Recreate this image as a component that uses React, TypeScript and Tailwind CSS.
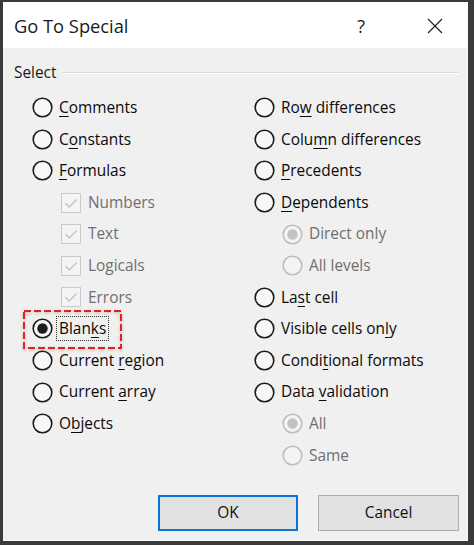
import React from "react";

const FONT = { fontFamily: '"Open Sans", "Noto Sans", sans-serif' };

function Radio({ checked = false, disabled = false }: { checked?: boolean; disabled?: boolean }) {
  const stroke = disabled ? "#bdbdbd" : "#1c1c1c";
  const dot = disabled ? "#c2c2c2" : "#1c1c1c";
  return (
    <svg width="21" height="21" viewBox="0 0 21 21" className="shrink-0">
      <circle cx="10.5" cy="10.5" r="9.3" fill={disabled ? "#f4f4f4" : "#f7f7f7"} stroke={stroke} strokeWidth="1.6" />
      {checked && <circle cx="10.5" cy="10.5" r="5.2" fill={dot} />}
    </svg>
  );
}

function Check() {
  return (
    <svg width="20" height="20" viewBox="0 0 20 20" className="shrink-0">
      <rect x="0.5" y="0.5" width="19" height="19" fill="#f4f4f4" stroke="#cacaca" strokeWidth="1" />
      <path d="M4.5 10.3 L8.2 14 L15.6 6.4" fill="none" stroke="#c4c4c4" strokeWidth="1.5" />
    </svg>
  );
}

function Label({ text, u }: { text: string; u?: number }) {
  if (u === undefined) return <span>{text}</span>;
  return (
    <span>
      {text.slice(0, u)}
      <span className="underline decoration-1 underline-offset-[3px]">{text[u]}</span>
      {text.slice(u + 1)}
    </span>
  );
}

function Row({ children }: { children: React.ReactNode }) {
  return <div className="h-[31.6px] flex items-center">{children}</div>;
}

function RadioRow({ text, u, checked }: { text: string; u?: number; checked?: boolean }) {
  return (
    <Row>
      <Radio checked={checked} />
      <span className="ml-[6px] text-[#0a0a0a]">
        <Label text={text} u={u} />
      </span>
    </Row>
  );
}

function CheckRow({ text }: { text: string }) {
  return (
    <Row>
      <div className="ml-[29px] flex items-center">
        <Check />
        <span className="ml-[7px] text-[#6f6f6f]">{text}</span>
      </div>
    </Row>
  );
}

function SubRadioRow({ text, checked }: { text: string; checked?: boolean }) {
  return (
    <Row>
      <div className="ml-[28px] flex items-center">
        <Radio disabled checked={checked} />
        <span className="ml-[6px] text-[#6f6f6f]">{text}</span>
      </div>
    </Row>
  );
}

export default function App() {
  return (
    <div className="w-[474px] h-[545px] bg-[#3b3b3b] pt-[2px] pl-[3px] overflow-hidden" style={FONT}>
      <div className="w-[465px] h-[539px] bg-[#f0f0f0] flex flex-col border-r border-b border-[#fafafa]">
        {/* Title bar */}
        <div className="h-[46px] bg-white flex items-center pl-[11px] pt-[2px] shrink-0">
          <span className="text-[18.3px] text-[#1a1a1a] leading-none">Go To Special</span>
          <span className="ml-auto text-[18px] text-[#1a1a1a] leading-none mr-[62px]">?</span>
          <svg width="16" height="16" viewBox="0 0 16 16" className="mr-[24px]">
            <path d="M1 1 L15 15 M15 1 L1 15" stroke="#1a1a1a" strokeWidth="1.1" />
          </svg>
        </div>

        {/* Body */}
        <div className="flex-1 flex flex-col text-[15.4px] leading-none">
          <div className="flex items-center h-[20px] mt-[15px] pl-[11px]">
            <span className="text-[15.4px] text-[#1a1a1a]">Select</span>
            <div className="ml-[7px] mr-[9px] flex-1 h-[2px] border-t border-[#d9d9d9] border-b-white border-b" />
          </div>

          <div className="flex mt-[9px] pl-[29px]">
            <div className="w-[222px] flex flex-col">
              <RadioRow text="Comments" u={0} />
              <RadioRow text="Constants" u={1} />
              <RadioRow text="Formulas" u={0} />
              <CheckRow text="Numbers" />
              <CheckRow text="Text" />
              <CheckRow text="Logicals" />
              <CheckRow text="Errors" />
              <div className="relative">
                <Row>
                  <Radio checked />
                  <span className="ml-[3px] text-[#0a0a0a] border border-dotted border-[#333] px-[2px] h-[25px] flex items-center">
                    <Label text="Blanks" u={4} />
                  </span>
                </Row>
                <svg
                  className="absolute left-[-9px] top-[-3px] pointer-events-none"
                  width="99"
                  height="39"
                  viewBox="0 0 99 39"
                  style={{ filter: "drop-shadow(0 1px 1.5px rgba(0,0,0,0.25))" }}
                >
                  <rect x="1" y="1" width="97" height="37" fill="none" stroke="#e3211d" strokeWidth="2" strokeDasharray="7 3" />
                </svg>
              </div>
              <RadioRow text="Current region" u={8} />
              <RadioRow text="Current array" u={8} />
              <RadioRow text="Objects" u={1} />
            </div>
            <div className="flex flex-col">
              <RadioRow text="Row differences" u={2} />
              <RadioRow text="Column differences" u={4} />
              <RadioRow text="Precedents" u={0} />
              <RadioRow text="Dependents" u={0} />
              <SubRadioRow text="Direct only" checked />
              <SubRadioRow text="All levels" />
              <RadioRow text="Last cell" u={2} />
              <RadioRow text="Visible cells only" u={16} />
              <RadioRow text="Conditional formats" u={5} />
              <RadioRow text="Data validation" u={5} />
              <SubRadioRow text="All" checked />
              <SubRadioRow text="Same" />
            </div>
          </div>

          <div className="flex mt-auto mb-[9px] pl-[155px] gap-[20px]">
            <button className="w-[140px] h-[36px] bg-[#e1e1e1] border-2 border-[#0a74d4] text-[15.4px] text-[#111]">
              OK
            </button>
            <button className="w-[141px] h-[36px] bg-[#e1e1e1] border border-[#adadad] text-[15.4px] text-[#111]">
              Cancel
            </button>
          </div>
        </div>
      </div>
    </div>
  );
}
